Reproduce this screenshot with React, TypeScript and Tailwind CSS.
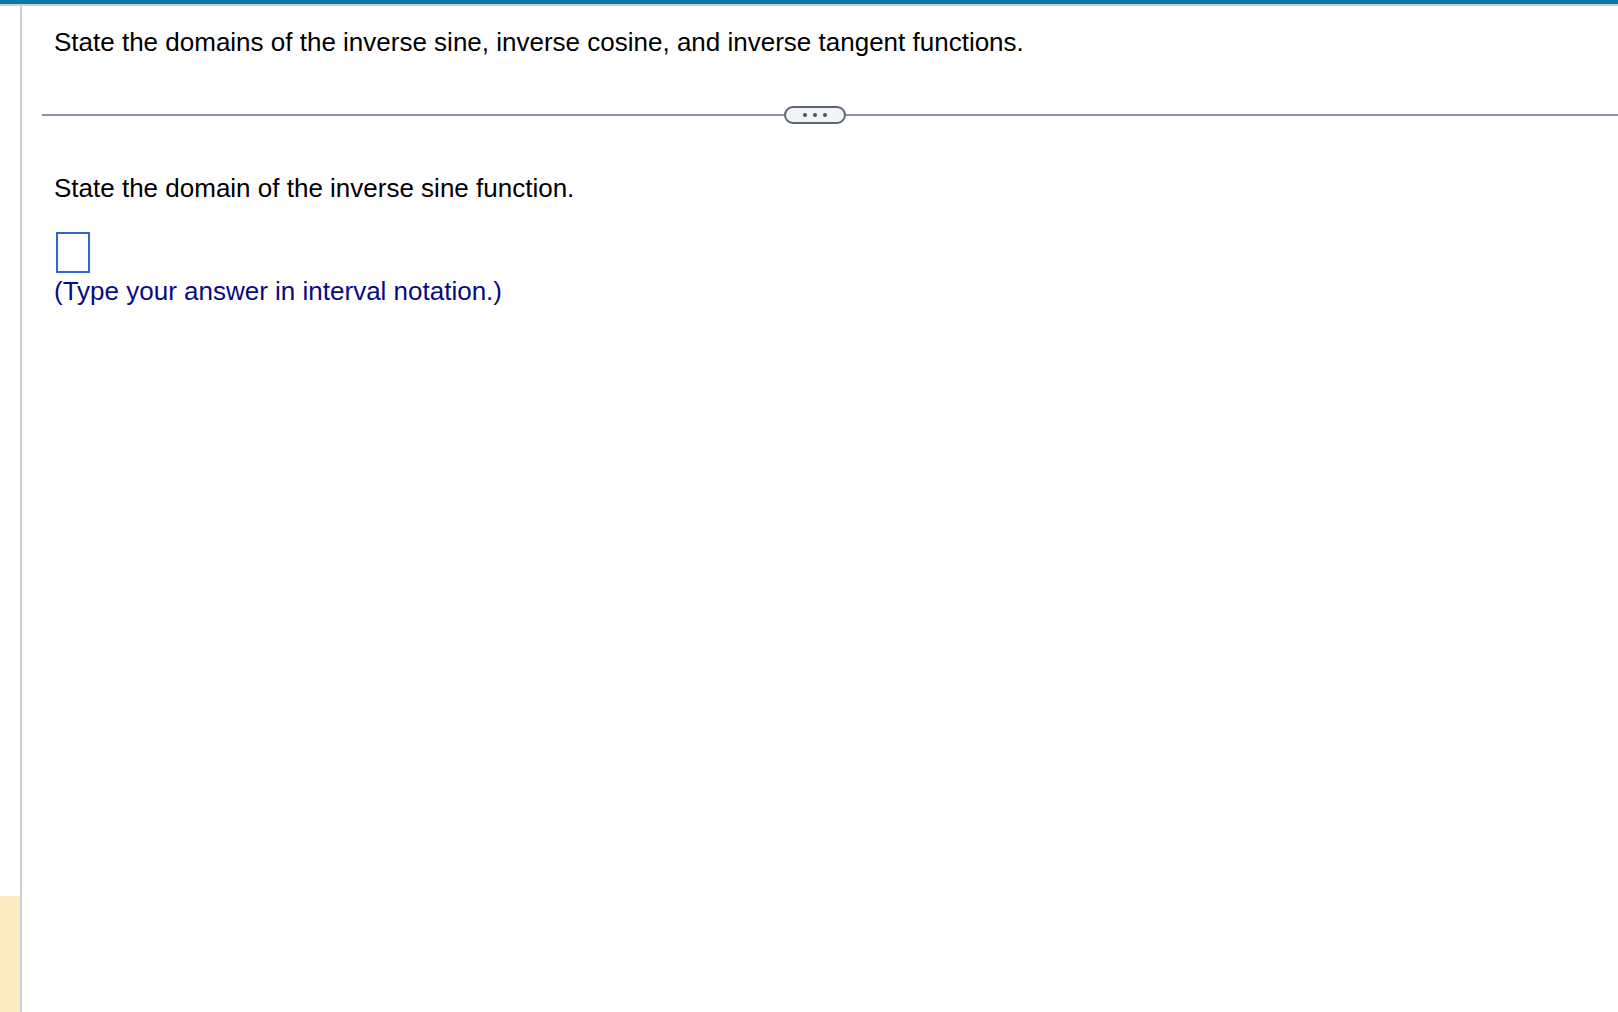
import React from "react";

export default function App() {
  return (
    <div
      className="w-full h-[1012px] bg-white flex flex-col overflow-hidden"
      style={{ fontFamily: '"Liberation Sans", Arial, sans-serif' }}
    >
      <div className="h-[4px] bg-[#0a7a9e] shrink-0" />
      <div className="h-[2px] bg-[#cbd2db] shrink-0" />
      <div className="flex flex-1 min-h-0">
        <div className="w-[20px] flex flex-col justify-end shrink-0">
          <div className="h-[116px] bg-[#faecc0]" />
        </div>
        <div className="w-[2px] bg-[#c9d0dc] shrink-0" />
        <div className="flex-1 min-w-0 pl-[20px]">
          <div className="pt-[21px] pl-[12px] text-[26px] leading-[30px] text-black">
            State the domains of the inverse sine, inverse cosine, and inverse tangent functions.
          </div>
          <div className="mt-[49px] flex items-center h-[18px]">
            <div className="w-[742px] h-[2px] bg-[#8a93a3] shrink-0" />
            <div className="w-[62px] h-[18px] rounded-full border-2 border-[#5b6676] bg-[#f3f4f6] flex items-center justify-center gap-[6px] shrink-0">
              <span className="w-[4px] h-[4px] rounded-full bg-[#4a5260]" />
              <span className="w-[4px] h-[4px] rounded-full bg-[#4a5260]" />
              <span className="w-[4px] h-[4px] rounded-full bg-[#4a5260]" />
            </div>
            <div className="flex-1 h-[2px] bg-[#8a93a3]" />
          </div>
          <div className="pl-[12px]">
            <div className="mt-[49px] text-[26px] leading-[30px] text-black">
              State the domain of the inverse sine function.
            </div>
            <div className="mt-[29px] ml-[2px] w-[34px] h-[41px] border-2 border-[#3067cf] bg-white" />
            <div className="mt-[3px] text-[26px] leading-[30px] text-[#0a0a80]">
              (Type your answer in interval notation.)
            </div>
          </div>
        </div>
      </div>
    </div>
  );
}
